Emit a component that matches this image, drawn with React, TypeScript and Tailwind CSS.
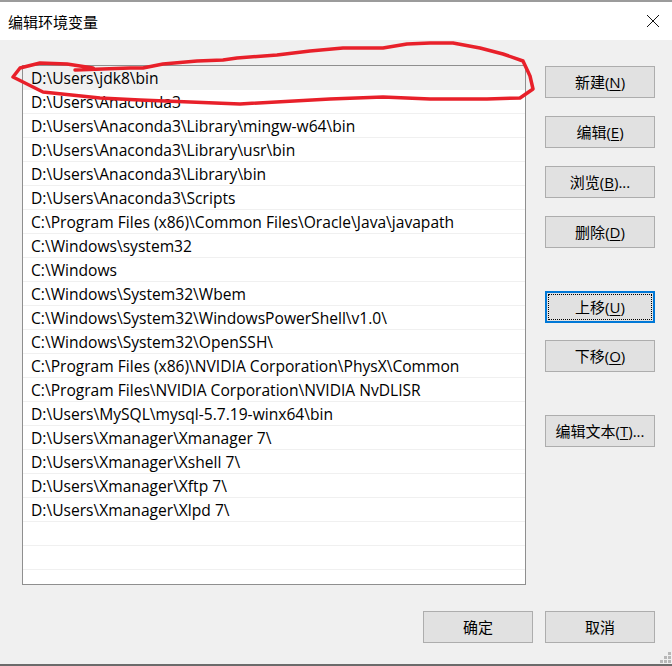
import React from 'react';

const paths = [
  'D:\\Users\\jdk8\\bin',
  'D:\\Users\\Anaconda3',
  'D:\\Users\\Anaconda3\\Library\\mingw-w64\\bin',
  'D:\\Users\\Anaconda3\\Library\\usr\\bin',
  'D:\\Users\\Anaconda3\\Library\\bin',
  'D:\\Users\\Anaconda3\\Scripts',
  'C:\\Program Files (x86)\\Common Files\\Oracle\\Java\\javapath',
  'C:\\Windows\\system32',
  'C:\\Windows',
  'C:\\Windows\\System32\\Wbem',
  'C:\\Windows\\System32\\WindowsPowerShell\\v1.0\\',
  'C:\\Windows\\System32\\OpenSSH\\',
  'C:\\Program Files (x86)\\NVIDIA Corporation\\PhysX\\Common',
  'C:\\Program Files\\NVIDIA Corporation\\NVIDIA NvDLISR',
  'D:\\Users\\MySQL\\mysql-5.7.19-winx64\\bin',
  'D:\\Users\\Xmanager\\Xmanager 7\\',
  'D:\\Users\\Xmanager\\Xshell 7\\',
  'D:\\Users\\Xmanager\\Xftp 7\\',
  'D:\\Users\\Xmanager\\Xlpd 7\\',
  '',
  '',
  '',
];

// hand-drawn red loop around the first entry
const loop =
  '75,70 130,68 143,68 163,64 197,61 223,60 237,58 277,55 310,51 343,48 383,48 407,44 430,43 453,43 480,48 503,54 523,61 530,76 533,89 520,98 487,99 430,99 383,97 330,99 240,104 140,100 100,98 43,92 13,77 20,68 40,63 67,64 93,68';

const FONT = { fontFamily: '"Open Sans", "Noto Sans CJK SC", sans-serif' };

function WinButton({
  label,
  mnemonic,
  suffix = '',
  focused = false,
  className = '',
}: {
  label: string;
  mnemonic?: string;
  suffix?: string;
  focused?: boolean;
  className?: string;
}) {
  return (
    <button
      className={`relative h-[32px] w-[110px] bg-[#e1e1e1] text-[15px] leading-none text-black flex items-center justify-center ${
        focused ? 'border-2 border-[#0078d7]' : 'border border-[#adadad]'
      } ${className}`}
    >
      {focused && (
        <span className="absolute inset-[1px] border border-dotted border-black pointer-events-none" />
      )}
      <span>
        {label}
        {mnemonic && (
          <>
            (<span className="underline underline-offset-2">{mnemonic}</span>)
          </>
        )}
        {suffix}
      </span>
    </button>
  );
}

export default function App() {
  return (
    <div className="relative w-[672px] h-[666px] flex flex-col bg-[#f0f0f0]" style={FONT}>
      {/* window top edge */}
      <div className="h-[2px] bg-[#9b9b9b]" />

      {/* title bar */}
      <div className="h-[38px] bg-white flex items-center justify-between pl-[8px] pr-[9px]">
        <span className="text-[15px] leading-none text-black" style={{ fontFamily: '"Noto Sans CJK SC", sans-serif' }}>
          编辑环境变量
        </span>
        <svg width="20" height="20" viewBox="0 0 20 20">
          <path d="M4 4 L16 16 M16 4 L4 16" stroke="#111" strokeWidth="1" fill="none" />
        </svg>
      </div>

      {/* body */}
      <div className="flex-1 flex flex-col pl-[22px] pr-[17px] pt-[25px]">
        <div className="flex gap-[19px]">
          <div className="w-[504px] h-[520px] border border-[#8f8f8f] bg-white overflow-hidden">
            {paths.map((p, i) => (
              <div
                key={i}
                className={`h-[24px] shrink-0 border-b border-[#f0f0f0] pl-[8px] pt-[2px] flex items-center text-[15.6px] text-black whitespace-nowrap ${
                  i === 0 ? 'bg-[#f0f0f0]' : ''
                }`}
              >
                {p}
              </div>
            ))}
          </div>

          <div className="flex flex-col">
            <WinButton label="新建" mnemonic="N" className="mt-[1px]" />
            <WinButton label="编辑" mnemonic="E" className="mt-[18px]" />
            <WinButton label="浏览" mnemonic="B" suffix="..." className="mt-[18px]" />
            <WinButton label="删除" mnemonic="D" className="mt-[18px]" />
            <WinButton label="上移" mnemonic="U" focused className="mt-[43px]" />
            <WinButton label="下移" mnemonic="O" className="mt-[17px]" />
            <WinButton label="编辑文本" mnemonic="T" suffix="..." className="mt-[43px]" />
          </div>
        </div>

        <div className="flex justify-end gap-[12px] mt-[26px]">
          <WinButton label="确定" />
          <WinButton label="取消" />
        </div>
      </div>

      {/* window bottom edge */}
      <div className="h-[2px] bg-[#6b6b6b]" />

      {/* resize grip */}
      <svg className="absolute right-[1px] bottom-[3px] pointer-events-none" width="12" height="12" viewBox="0 0 12 12">
        <g fill="#b8b8b8">
          <rect x="9" y="1" width="3" height="3" />
          <rect x="5" y="5" width="3" height="3" />
          <rect x="9" y="5" width="3" height="3" />
          <rect x="1" y="9" width="3" height="3" />
          <rect x="5" y="9" width="3" height="3" />
          <rect x="9" y="9" width="3" height="3" />
        </g>
      </svg>

      {/* red annotation */}
      <svg className="absolute inset-0 pointer-events-none" width="672" height="666" viewBox="0 0 672 666">
        <polyline
          points={loop}
          fill="none"
          stroke="#e8202a"
          strokeWidth="3.5"
          strokeLinejoin="round"
          strokeLinecap="round"
        />
      </svg>
    </div>
  );
}
